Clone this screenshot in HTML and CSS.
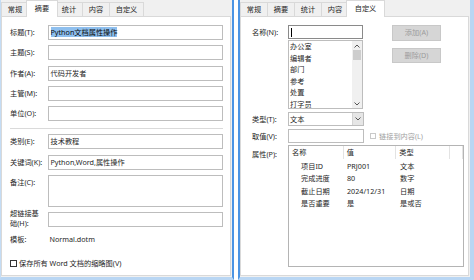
FILE: index.html
```html
<!DOCTYPE html>
<html>
<head>
    <title>文档属性</title>
    <link rel="stylesheet" href="styles.css">
</head>
<body>
    <div class="screen">
        <!-- 摘要 tab -->
        <div class="win win-left">
            <div class="tabs">
                <span class="tab">常规</span>
                <span class="tab active">摘要</span>
                <span class="tab">统计</span>
                <span class="tab">内容</span>
                <span class="tab">自定义</span>
            </div>
            <div class="page summary">
                <div class="form">
                    <span class="label">标题(T):</span>
                    <div class="field"><span class="selected">Python文档属性操作</span></div>
                    <span class="label">主题(S):</span>
                    <div class="field"></div>
                    <span class="label">作者(A):</span>
                    <div class="field">代码开发者</div>
                    <span class="label">主管(M):</span>
                    <div class="field"></div>
                    <span class="label">单位(O):</span>
                    <div class="field"></div>
                    <div class="sep"></div>
                    <span class="label">类别(E):</span>
                    <div class="field">技术教程</div>
                    <span class="label">关键词(K):</span>
                    <div class="field">Python,Word,属性操作</div>
                    <span class="label top">备注(C):</span>
                    <div class="field tall"></div>
                    <span class="label two">超链接基<br>础(H):</span>
                    <div class="field"></div>
                    <span class="label">模板:</span>
                    <div class="plain">Normal.dotm</div>
                </div>
                <div class="check-row">
                    <span class="box"></span>保存所有 Word 文档的缩略图(V)
                </div>
            </div>
        </div>

        <!-- 自定义 tab -->
        <div class="win win-right">
            <div class="tabs">
                <span class="tab">常规</span>
                <span class="tab">摘要</span>
                <span class="tab">统计</span>
                <span class="tab">内容</span>
                <span class="tab active">自定义</span>
            </div>
            <div class="page custom">
                <div class="row">
                    <span class="lbl">名称(N):</span>
                    <div class="col">
                        <div class="input name-input"><span class="caret"></span></div>
                        <div class="listbox">
                            <div class="items">
                                <div>办公室</div>
                                <div>编辑者</div>
                                <div>部门</div>
                                <div>参考</div>
                                <div>处置</div>
                                <div>打字员</div>
                            </div>
                            <div class="scroll">
                                <span class="arrow">
                                    <svg width="6" height="4" viewBox="0 0 6 4"><polyline points="0.5,3.5 3,1 5.5,3.5" fill="none" stroke="#555" stroke-width="1"/></svg>
                                </span>
                                <span class="thumb"></span>
                                <span class="spacer"></span>
                                <span class="arrow">
                                    <svg width="6" height="4" viewBox="0 0 6 4"><polyline points="0.5,0.5 3,3 5.5,0.5" fill="none" stroke="#555" stroke-width="1"/></svg>
                                </span>
                            </div>
                        </div>
                    </div>
                    <div class="buttons">
                        <div class="btn">添加(A)</div>
                        <div class="btn">删除(D)</div>
                    </div>
                </div>

                <div class="row gap3">
                    <span class="lbl">类型(T):</span>
                    <div class="input select">
                        <span class="select-text">文本</span>
                        <span class="drop">
                            <svg width="6" height="4" viewBox="0 0 6 4"><polyline points="0.5,0.5 3,3 5.5,0.5" fill="none" stroke="#555" stroke-width="1"/></svg>
                        </span>
                    </div>
                </div>

                <div class="row gap3">
                    <span class="lbl">取值(V):</span>
                    <div class="input wide"></div>
                    <span class="link-box"></span>
                    <span class="link-text">链接到内容(L)</span>
                </div>

                <div class="row gap2">
                    <span class="lbl props-lbl">属性(P):</span>
                    <div class="listview">
                        <div class="lv-head">
                            <span class="c1">名称</span>
                            <span class="c2">值</span>
                            <span class="c3">类型</span>
                            <span class="c4"></span>
                        </div>
                        <div class="lv-body">
                            <div class="lv-row"><span class="c1">项目ID</span><span class="c2">PRJ001</span><span class="c3">文本</span></div>
                            <div class="lv-row"><span class="c1">完成进度</span><span class="c2">80</span><span class="c3">数字</span></div>
                            <div class="lv-row"><span class="c1">截止日期</span><span class="c2">2024/12/31</span><span class="c3">日期</span></div>
                            <div class="lv-row"><span class="c1">是否重要</span><span class="c2">是</span><span class="c3">是或否</span></div>
                        </div>
                    </div>
                </div>
            </div>
        </div>
    </div>
</body>
</html>
```

FILE: styles.css
```css
body {
    margin: 0;
    background: #ffffff;
    font-family: "Noto Sans", "Noto Sans CJK SC", sans-serif;
    font-size: 7.2px;
    color: #262626;
}

.screen {
    display: flex;
    width: 474px;
    height: 280px;
    overflow: hidden;
}

/* Window frame */
.win {
    display: flex;
    flex-direction: column;
    box-sizing: border-box;
    height: 280px;
    background: #f0f0f0;
    border-bottom: 3px solid #b9d6f3;
}

.win-left {
    width: 234px;
    border-left: 1px solid #c4dcf4;
    border-right: 2px solid #4b94e4;
}

.win-right {
    width: 236px;
    margin-left: 4px;
    border-left: 2px solid #4b94e4;
    border-right: 4px solid #b9d6f3;
}

/* Tabs */
.tabs {
    display: flex;
    align-items: flex-end;
    height: 16px;
    flex: none;
    position: relative;
    z-index: 1;
}

.tab {
    box-sizing: border-box;
    height: 14px;
    line-height: 12px;
    padding: 0 5.8px;
    margin-right: -1px;
    border: 1px solid #d9d9d9;
    border-bottom: none;
    background: #f0f0f0;
    white-space: nowrap;
}

.tab.active {
    height: 17px;
    line-height: 15px;
    padding: 0 7.8px;
    margin: 0 -3px -1px -2px;
    background: #ffffff;
    position: relative;
    z-index: 2;
}

.page {
    flex: 1;
    background: #ffffff;
    border: 1px solid #d9d9d9;
    margin: 0 1px 1px 0;
}

/* Summary tab */
.summary {
    padding: 8px 7px 0 8px;
}

.form {
    display: grid;
    grid-template-columns: 38px 1fr;
    row-gap: 5.25px;
    align-items: center;
}

.label {
    line-height: 15px;
    white-space: nowrap;
}

.label.top {
    align-self: start;
    line-height: 14px;
}

.label.two {
    line-height: 9.5px;
    margin: -3px 0 -1px;
}

.field {
    box-sizing: border-box;
    height: 15px;
    line-height: 13px;
    padding-left: 1.5px;
    border: 1px solid #bdbdbd;
    background: #ffffff;
    white-space: nowrap;
}

.field.tall {
    height: 32px;
}

.selected {
    background: #8ebfee;
    color: #0a0a0a;
}

.plain {
    line-height: 15px;
    padding-left: 1.5px;
}

.sep {
    grid-column: 1 / -1;
    height: 1px;
    margin-top: 1.75px;
    background: #dadada;
}

.check-row {
    display: flex;
    align-items: center;
    margin-top: 11px;
    line-height: 10px;
}

.box {
    box-sizing: border-box;
    width: 7px;
    height: 7px;
    margin-right: 2px;
    border: 1px solid #333333;
    background: #ffffff;
}

/* Custom tab */
.custom {
    padding: 8px 3px 0 11px;
}

.row {
    display: flex;
    align-items: flex-start;
}

.gap3 { margin-top: 3px; align-items: center; }
.gap2 { margin-top: 2px; }

.lbl {
    flex: none;
    width: 36px;
    line-height: 14px;
    white-space: nowrap;
}

.props-lbl {
    padding-top: 1.5px;
}

.col {
    width: 75px;
}

.input {
    box-sizing: border-box;
    height: 14px;
    border: 1px solid #bdbdbd;
    background: #ffffff;
}

.input.wide {
    width: 76px;
}

.name-input {
    border-color: #8a8a8a;
    padding: 2px 0 0 2px;
}

.caret {
    display: block;
    width: 1px;
    height: 9px;
    background: #000000;
}

.listbox {
    display: flex;
    box-sizing: border-box;
    height: 69px;
    margin-top: 1px;
    border: 1px solid #bdbdbd;
    background: #ffffff;
}

.items {
    flex: 1;
    padding-left: 1px;
    line-height: 11.5px;
    white-space: nowrap;
    overflow: hidden;
}

.scroll {
    display: flex;
    flex-direction: column;
    align-items: center;
    width: 10px;
    background: #f0f0f0;
}

.arrow {
    display: flex;
    align-items: center;
    justify-content: center;
    height: 9px;
}

.thumb {
    width: 8px;
    height: 10px;
    background: #cdcdcd;
}

.spacer {
    flex: 1;
}

.buttons {
    display: flex;
    flex-direction: column;
    gap: 7px;
    margin-left: 29px;
    width: 49px;
}

.btn {
    box-sizing: border-box;
    height: 15.5px;
    line-height: 13.5px;
    text-align: center;
    background: #d6d6d6;
    border: 1px solid #c8c8c8;
    color: #9c9c9c;
}

.select {
    display: flex;
    width: 76px;
}

.select-text {
    flex: 1;
    line-height: 12px;
    padding-left: 1px;
}

.drop {
    display: flex;
    align-items: center;
    justify-content: center;
    width: 10px;
    background: #e6e6e6;
    border-left: 1px solid #d4d4d4;
}

.link-box {
    box-sizing: border-box;
    width: 6px;
    height: 6px;
    margin-left: 6px;
    border: 1px solid #c9c9c9;
}

.link-text {
    margin-left: 3px;
    color: #a2a2a2;
    white-space: nowrap;
}

/* Property list */
.listview {
    box-sizing: border-box;
    width: 176px;
    height: 122px;
    border: 1px solid #b4b4b4;
    background: #ffffff;
}

.lv-head,
.lv-row {
    display: flex;
    white-space: nowrap;
}

.lv-head span {
    box-sizing: border-box;
    height: 13px;
    line-height: 13px;
    padding-left: 3px;
    border-right: 1px solid #e3e3e3;
}

.lv-head .c4 {
    width: 13px;
}

.c1 { width: 55px; }
.c2 { width: 53px; }
.c3 { width: 54px; }

.lv-body {
    padding-top: 1px;
}

.lv-row span {
    box-sizing: border-box;
    line-height: 12.3px;
    padding-left: 3px;
}

.lv-row .c1 {
    padding-left: 12px;
}
```
